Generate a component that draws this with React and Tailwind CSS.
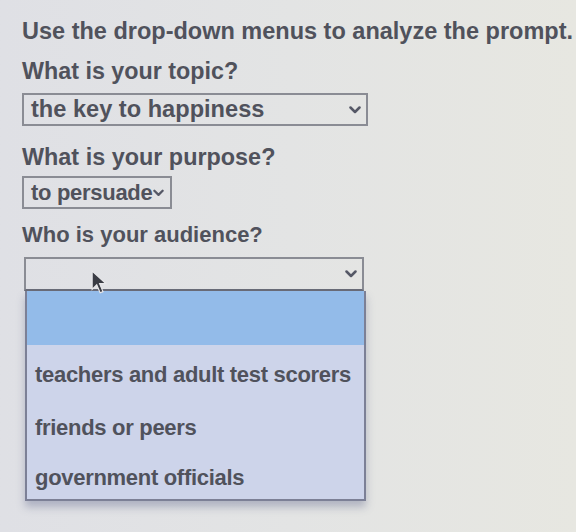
import React from 'react';

const Chevron = ({ className = '' }) => (
  <svg viewBox="0 0 12 8" className={className} fill="none">
    <path d="M1.5 1.5 L6 6 L10.5 1.5" stroke="#555866" strokeWidth="2.5" strokeLinecap="round" strokeLinejoin="round" />
  </svg>
);

const Cursor = () => (
  <svg viewBox="0 0 14 22" className="absolute left-[67px] top-[12px] w-[16px] h-[27px]">
    <path d="M1 1 L1 17 L5 13 L8 20 L10.5 19 L7.5 12 L13 12 Z" fill="#3a3c44" stroke="#e8e8ea" strokeWidth="1" />
  </svg>
);

const audiences = ['teachers and adult test scorers', 'friends or peers', 'government officials'];

const App = () => {
  return (
    <div
      className="w-[576px] h-[532px] overflow-hidden bg-gradient-to-r from-[#dfe0e5] via-[#e3e4e4] to-[#e7e7e1] text-[#50525c] pl-[22px] pt-[14px]"
      style={{ fontFamily: '"Liberation Sans", Arial, sans-serif' }}
    >
      <h1 className="text-[23.5px] leading-[34px] font-bold whitespace-nowrap">
        Use the drop-down menus to analyze the prompt.
      </h1>

      <p className="mt-[9px] text-[23.3px] leading-[28px] font-bold">What is your topic?</p>
      <div className="mt-[8px] w-[346px] h-[33px] border-2 border-[#8a8c94] flex items-center justify-between pl-[7px] pr-[5px]">
        <span className="text-[23.6px] font-bold">the key to happiness</span>
        <Chevron className="w-[12px] h-[8px]" />
      </div>

      <p className="mt-[17px] text-[23.4px] leading-[28px] font-bold">What is your purpose?</p>
      <div className="mt-[5px] w-[150px] h-[33px] border-2 border-[#8a8c94] flex items-center pl-[7px] gap-[1px]">
        <span className="text-[22px] font-bold tracking-[-0.3px]">to persuade</span>
        <Chevron className="w-[11px] h-[8px]" />
      </div>

      <p className="mt-[12px] text-[22px] leading-[28px] font-bold">Who is your audience?</p>
      <div className="relative mt-[8px] ml-[2px] w-[340px]">
        <div className="h-[34px] border-2 border-[#8a8c94] border-b-[#6a6c78] flex items-center justify-end pr-[5px]">
          <Chevron className="w-[12px] h-[8px]" />
        </div>
        <Cursor />
        <div className="ml-[1px] w-[341px] border-2 border-t-0 border-[#7c8096] bg-[#cdd4ea] shadow-[0_6px_8px_rgba(80,90,130,0.35)]">
          <div className="h-[54px] bg-[#93bbe9]" />
          {audiences.map((a, i) => (
            <div
              key={a}
              className={`flex items-center pl-[8px] pt-[5px] text-[22px] font-bold tracking-[-0.3px] ${i === 2 ? 'h-[48px]' : 'h-[53px]'}`}
            >
              {a}
            </div>
          ))}
        </div>
      </div>
    </div>
  );
};

export default App;
